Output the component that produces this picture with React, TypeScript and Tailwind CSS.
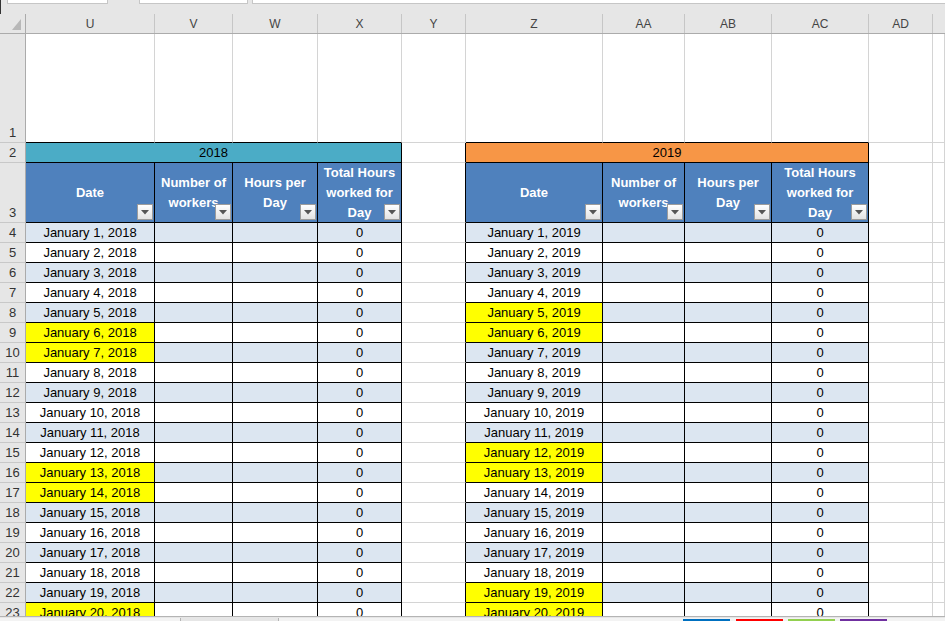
import React from "react";

const COLS = [
  { id: "U", w: 129 },
  { id: "V", w: 78 },
  { id: "W", w: 85 },
  { id: "X", w: 84 },
  { id: "Y", w: 64 },
  { id: "Z", w: 137 },
  { id: "AA", w: 82 },
  { id: "AB", w: 87 },
  { id: "AC", w: 97 },
  { id: "AD", w: 64 },
];

const months = "January";
const weekend2018 = [6, 7, 13, 14, 20];
const weekend2019 = [5, 6, 12, 13, 19, 20];

const GRID = "border-r border-b border-[#d4d4d4]";
const BLACK = "border-r border-b border-black";

function FilterBtn() {
  return (
    <div className="absolute bottom-[2px] right-[1px] w-[16px] h-[16px] border border-[#9c9c9c] bg-gradient-to-b from-white to-[#e3e3e3] flex items-center justify-center">
      <svg width="8" height="5" viewBox="0 0 8 5">
        <path d="M0 0 L8 0 L4 4.5 Z" fill="#555" />
      </svg>
    </div>
  );
}

function RowHead({ n, h, bottom }: { n: number | string; h: number; bottom?: boolean }) {
  return (
    <div
      className={`w-[26px] shrink-0 bg-[#e6e6e6] border-r border-b border-r-[#ababab] border-b-[#c8c8c8] flex justify-center text-[13px] text-[#333] leading-[19px] ${bottom ? "items-end" : "items-center"}`}
      style={{ height: h }}
    >
      {n}
    </div>
  );
}

function HeaderCell({ w, lines }: { w: number; lines: string[] }) {
  return (
    <div
      className={`relative shrink-0 h-full bg-[#4f81bd] ${BLACK} flex flex-col items-center justify-center text-white font-bold text-[13px] leading-[20px] text-center`}
      style={{ width: w }}
    >
      {lines.map((l, i) => (
        <span key={i} className="whitespace-nowrap">{l}</span>
      ))}
      <FilterBtn />
    </div>
  );
}

export default function App() {
  const rows = Array.from({ length: 20 }, (_, i) => i);

  return (
    <div
      className="relative w-[945px] h-[621px] overflow-hidden bg-white"
      style={{ fontFamily: '"Liberation Sans", Arial, sans-serif' }}
    >
      {/* top strip */}
      <div className="relative h-[14px] bg-[#e6e6e6] border-l border-[#333]">
        <div className="absolute left-[6px] top-0 w-[101px] h-[4px] bg-white border border-t-0 border-[#c6c6c6]" />
        <div className="absolute left-[138px] top-0 w-[109px] h-[4px] bg-white border border-t-0 border-[#c6c6c6]" />
        <div className="absolute left-[251px] top-0 right-0 h-[4px] bg-white border border-t-0 border-r-0 border-[#c6c6c6]" />
      </div>

      {/* column letters */}
      <div className="flex h-[20px] bg-[#e6e6e6] border-b border-[#ababab]">
        <div className="w-[26px] shrink-0 border-r border-[#ababab] relative">
          <svg className="absolute right-[4px] bottom-[3px]" width="9" height="11" viewBox="0 0 9 11">
            <path d="M9 0 L9 11 L0 11 Z" fill="#b8b8b8" />
          </svg>
        </div>
        {COLS.map((c) => (
          <div
            key={c.id}
            className="shrink-0 border-r border-[#c6c6c6] flex items-center justify-center text-[12px] text-[#444]"
            style={{ width: c.w }}
          >
            {c.id}
          </div>
        ))}
        <div className="flex-1" />
      </div>

      {/* row 1 */}
      <div className="flex h-[109px]">
        <RowHead n={1} h={109} bottom />
        {COLS.map((c, i) => {
          const inTable = i !== 4 && i !== 9;
          return (
            <div
              key={c.id}
              className={`shrink-0 border-r border-b border-r-[#d4d4d4] ${inTable ? "border-b-black" : "border-b-[#d4d4d4]"}`}
              style={{ width: c.w }}
            />
          );
        })}
        <div className={`flex-1 ${GRID}`} />
      </div>

      {/* row 2 */}
      <div className="flex h-[20px]">
        <RowHead n={2} h={20} />
        <div className={`w-[376px] shrink-0 bg-[#4bacc6] ${BLACK} flex items-center justify-center text-[13px] text-black`}>
          2018
        </div>
        <div className="w-[64px] shrink-0 border-r border-b border-r-black border-b-[#d4d4d4]" />
        <div className={`w-[403px] shrink-0 bg-[#f79646] ${BLACK} flex items-center justify-center text-[13px] text-black`}>
          2019
        </div>
        <div className={`w-[64px] shrink-0 ${GRID}`} />
        <div className={`flex-1 ${GRID}`} />
      </div>

      {/* row 3 headers */}
      <div className="flex h-[60px]">
        <RowHead n={3} h={60} bottom />
        <HeaderCell w={129} lines={["Date"]} />
        <HeaderCell w={78} lines={["Number of", "workers"]} />
        <HeaderCell w={85} lines={["Hours per", "Day"]} />
        <HeaderCell w={84} lines={["Total Hours", "worked for", "Day"]} />
        <div className="w-[64px] shrink-0 border-r border-b border-r-black border-b-[#d4d4d4]" />
        <HeaderCell w={137} lines={["Date"]} />
        <HeaderCell w={82} lines={["Number of", "workers"]} />
        <HeaderCell w={87} lines={["Hours per", "Day"]} />
        <HeaderCell w={97} lines={["Total Hours", "worked for", "Day"]} />
        <div className={`w-[64px] shrink-0 ${GRID}`} />
        <div className={`flex-1 ${GRID}`} />
      </div>

      {/* data rows */}
      {rows.map((i) => {
        const day = i + 1;
        const band = i % 2 === 0 ? "bg-[#dce6f1]" : "bg-white";
        const y18 = weekend2018.includes(day) ? "bg-[#ffff00]" : band;
        const y19 = weekend2019.includes(day) ? "bg-[#ffff00]" : band;
        const txt = "flex items-center justify-center text-[13px] text-black whitespace-nowrap";
        return (
          <div key={i} className="flex h-[20px]">
            <RowHead n={i + 4} h={20} />
            <div className={`w-[129px] shrink-0 ${y18} ${BLACK} ${txt}`}>{`${months} ${day}, 2018`}</div>
            <div className={`w-[78px] shrink-0 ${band} ${BLACK}`} />
            <div className={`w-[85px] shrink-0 ${band} ${BLACK}`} />
            <div className={`w-[84px] shrink-0 ${band} ${BLACK} ${txt}`}>0</div>
            <div className="w-[64px] shrink-0 border-r border-b border-r-black border-b-[#d4d4d4]" />
            <div className={`w-[137px] shrink-0 ${y19} ${BLACK} ${txt}`}>{`${months} ${day}, 2019`}</div>
            <div className={`w-[82px] shrink-0 ${band} ${BLACK}`} />
            <div className={`w-[87px] shrink-0 ${band} ${BLACK}`} />
            <div className={`w-[97px] shrink-0 ${band} ${BLACK} ${txt}`}>0</div>
            <div className={`w-[64px] shrink-0 ${GRID}`} />
            <div className={`flex-1 ${GRID}`} />
          </div>
        );
      })}

      {/* bottom scroll strip */}
      <div className="absolute left-0 right-0 bottom-0 h-[5px] bg-[#e6e6e6] border-t border-[#b4b4b4]">
        <div className="absolute left-0 top-[1px] w-[181px] h-[4px] bg-[#f3f3f3] border-r border-[#b4b4b4]" />
        <div className="absolute left-[278px] top-[1px] right-0 h-[4px] bg-[#f3f3f3] border-l border-[#b4b4b4]" />
        <div className="absolute left-[683px] bottom-0 w-[47px] h-[2px] bg-[#0070c0]" />
        <div className="absolute left-[736px] bottom-0 w-[47px] h-[2px] bg-[#ff0000]" />
        <div className="absolute left-[788px] bottom-0 w-[47px] h-[2px] bg-[#92d050]" />
        <div className="absolute left-[840px] bottom-0 w-[47px] h-[2px] bg-[#7030a0]" />
      </div>
    </div>
  );
}
